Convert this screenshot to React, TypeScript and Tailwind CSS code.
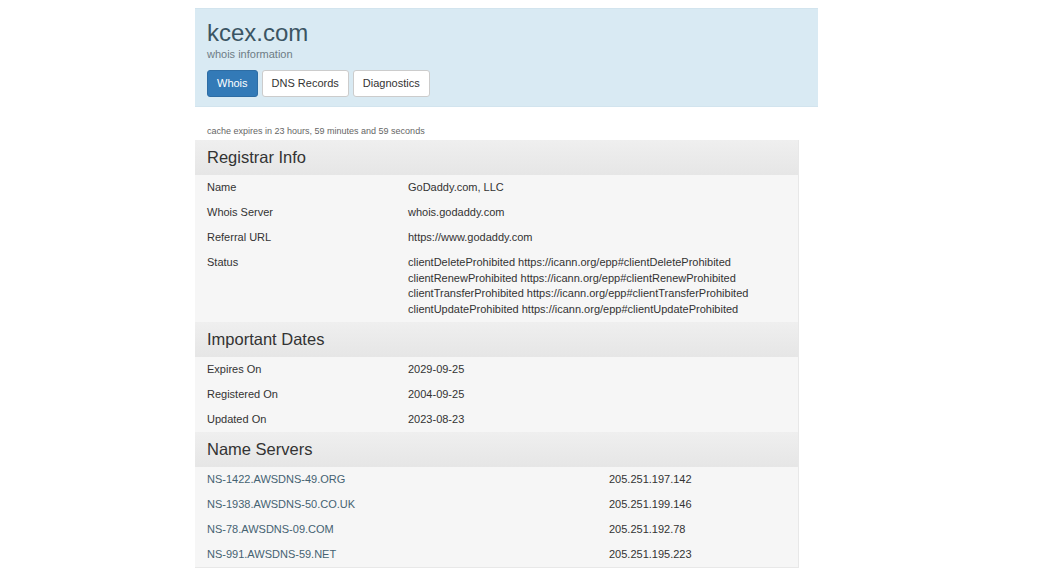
import React from "react";

const registrar = [
    { label: "Name", value: ["GoDaddy.com, LLC"] },
    { label: "Whois Server", value: ["whois.godaddy.com"] },
    { label: "Referral URL", value: ["https://www.godaddy.com"] },
    {
        label: "Status",
        value: [
            "clientDeleteProhibited https://icann.org/epp#clientDeleteProhibited",
            "clientRenewProhibited https://icann.org/epp#clientRenewProhibited",
            "clientTransferProhibited https://icann.org/epp#clientTransferProhibited",
            "clientUpdateProhibited https://icann.org/epp#clientUpdateProhibited",
        ],
    },
];

const dates = [
    { label: "Expires On", value: ["2029-09-25"] },
    { label: "Registered On", value: ["2004-09-25"] },
    { label: "Updated On", value: ["2023-08-23"] },
];

const servers = [
    ["NS-1422.AWSDNS-49.ORG", "205.251.197.142"],
    ["NS-1938.AWSDNS-50.CO.UK", "205.251.199.146"],
    ["NS-78.AWSDNS-09.COM", "205.251.192.78"],
    ["NS-991.AWSDNS-59.NET", "205.251.195.223"],
];

function SectionHeader({ title }: { title: string }) {
    return (
        <div className="h-[35px] flex items-center px-3 bg-gradient-to-b from-[#efefef] to-[#e6e6e6] text-[16.5px] text-[#333]">
            {title}
        </div>
    );
}

function InfoRow({ label, value }: { label: string; value: string[] }) {
    const multi = value.length > 1;
    return (
        <div className={`flex px-3 text-[11px] text-[#333] ${multi ? "py-[5px]" : "h-[25px] items-center"}`}>
            <div className="w-[201px] shrink-0 leading-[15.5px]">{label}</div>
            <div className="leading-[15.5px]">
                {value.map((v) => (
                    <div key={v}>{v}</div>
                ))}
            </div>
        </div>
    );
}

export default function App() {
    return (
        <div className="min-h-[582px] bg-white pt-2 pl-[195px]" style={{ fontFamily: '"Liberation Sans", Arial, sans-serif' }}>
            <div className="w-[623px] h-[99px] bg-[#d9eaf3] border-y border-[#d2e4ee] px-3 pt-[10px]">
                <h1 className="text-[24px] leading-[28px] text-[#3b5563]">kcex.com</h1>
                <p className="text-[11px] leading-[14px] text-[#6d7c85]">whois information</p>
                <div className="flex gap-1 mt-[9px]">
                    <button className="h-[27px] px-[9px] rounded-[3px] bg-[#337ab7] border border-[#2e6da4] text-white text-[11px]">
                        Whois
                    </button>
                    <button className="h-[27px] px-[9px] rounded-[3px] bg-white border border-[#ccc] text-[#333] text-[11px]">
                        DNS Records
                    </button>
                    <button className="h-[27px] px-[9px] rounded-[3px] bg-white border border-[#ccc] text-[#333] text-[11px]">
                        Diagnostics
                    </button>
                </div>
            </div>

            <p className="text-[9px] leading-[12px] text-[#666] pl-3 mt-[18px] mb-[3px]">
                cache expires in 23 hours, 59 minutes and 59 seconds
            </p>

            <div className="w-[604px] bg-[#f6f6f6] border-r border-b border-[#e8e8e8]">
                <SectionHeader title="Registrar Info" />
                {registrar.map((r) => (
                    <InfoRow key={r.label} label={r.label} value={r.value} />
                ))}
                <SectionHeader title="Important Dates" />
                {dates.map((r) => (
                    <InfoRow key={r.label} label={r.label} value={r.value} />
                ))}
                <SectionHeader title="Name Servers" />
                {servers.map(([ns, ip]) => (
                    <div key={ns} className="flex h-[25px] items-center px-3 text-[11px]">
                        <div className="w-[402px] shrink-0 text-[#456272]">{ns}</div>
                        <div className="text-[#333]">{ip}</div>
                    </div>
                ))}
            </div>
        </div>
    );
}
